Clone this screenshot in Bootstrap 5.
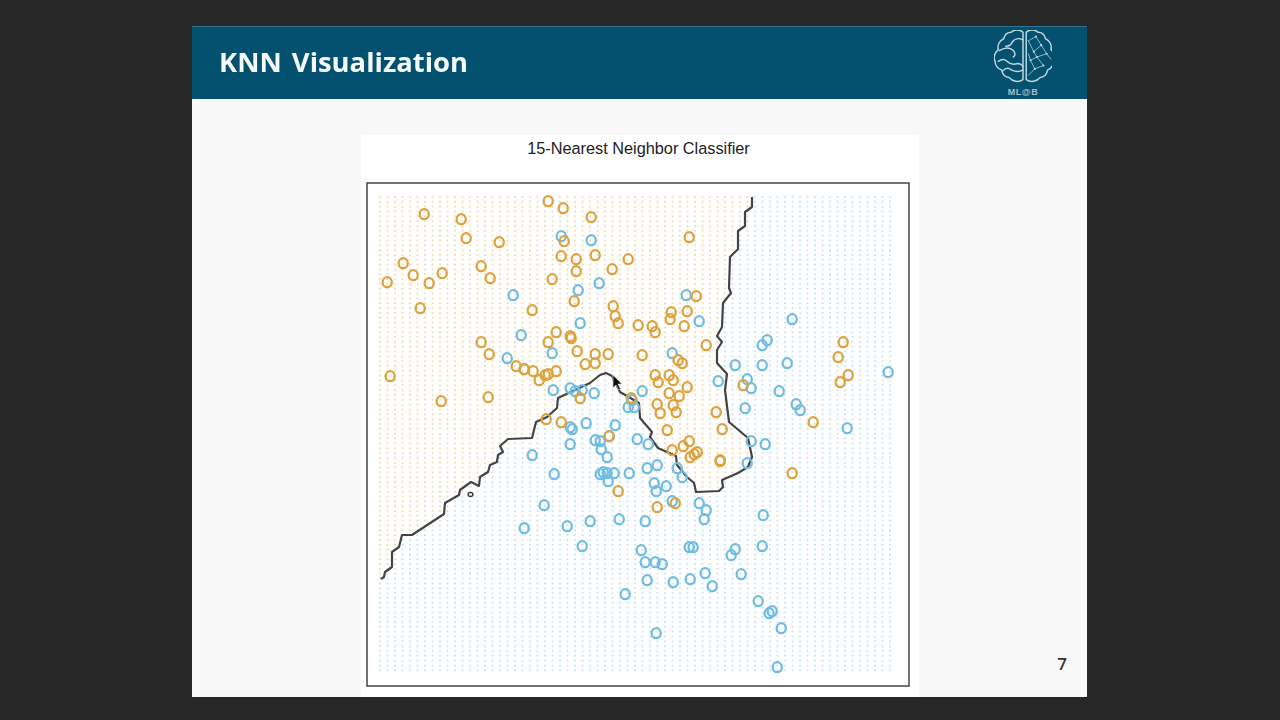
<!DOCTYPE html>
<html lang="en">
  <head>
    <meta charset="UTF-8" />
    <title>KNN Visualization</title>
    <link
      href="https://cdn.jsdelivr.net/npm/bootstrap@5.3.0/dist/css/bootstrap.min.css"
      rel="stylesheet"
    />
    <style>
      body {
        background-color: #272727;
        overflow: hidden;
      }

      .slide-frame {
        width: 895px;
        height: 671px;
        margin: 26px 0 0 192px;
        background-color: #f8f8f8;
        position: relative;
      }

      .slide-head {
        height: 73px;
        padding: 0 35px 0 27px;
        background-color: #04506f;
        border-top: 1px solid #2f7390;
      }

      .slide-title {
        margin: 0 0 2px;
        color: #f6f9fa;
        font-family: "Open Sans", sans-serif;
        font-weight: 700;
        font-size: 27.4px;
        word-spacing: 3px;
        filter: blur(0.3px);
      }

      .brain-logo {
        width: 58px;
        color: #bcd6df;
      }

      .brain-logo svg {
        display: block;
        filter: blur(0.4px);
      }

      .logo-text {
        margin-top: 4px;
        color: #a3bfca;
        font-family: "Liberation Sans", sans-serif;
        font-weight: 700;
        font-size: 9px;
        line-height: 9px;
        letter-spacing: 0.6px;
        text-align: center;
      }

      .chart-panel {
        width: 558px;
        height: 562px;
        margin: 36px 0 0 169px;
        background-color: #fff;
      }

      .chart-title {
        height: 40px;
        padding: 3px 3px 0 0;
        color: #222;
        font-family: "Liberation Sans", sans-serif;
        font-size: 16.3px;
        line-height: 20px;
        text-align: center;
      }

      .chart-panel svg {
        display: block;
        filter: blur(0.4px);
      }

      .page-no {
        position: absolute;
        right: 20px;
        bottom: 23px;
        color: #333;
        font-family: "Open Sans", sans-serif;
        font-weight: 600;
        font-size: 17px;
        line-height: 20px;
      }
    </style>
  </head>
  <body>
    <div class="slide-frame">
      <div class="slide-head d-flex align-items-center justify-content-between">
        <h1 class="slide-title">KNN Visualization</h1>
        <div class="brain-logo">
          <svg width="58" height="54" viewBox="996 33 54 50" fill="none" stroke="currentColor" stroke-width="1.4" stroke-linecap="round" stroke-linejoin="round">
            <!-- left half -->
            <path d="M1023 35c-3-3-8-3-11 0-3 0-6 2-7 6-4 2-6 6-5 10-3 3-5 7-3 11 0 4 3 7 6 8 1 4 3 7 7 7 3 4 9 5 13 2z" />
            <path d="M1023 42c-4-2-8-1-10 2-1 3-3 4-6 4M1001 52c5-3 10-3 13 0 2 2 2 5 0 6M1000 62c3-2 6-2 8 0 3 3 7 3 10 2 2 0 4 1 5 3M1004 71c3-3 6-3 8-1 4 2 8 2 11 0" />
            <!-- right half -->
            <path d="M1026 35c3-3 8-3 11 0 3 0 6 2 7 6 4 2 6 6 5 10 3 3 4 7 3 11-1 4-3 7-6 8-1 4-3 7-7 7-3 4-9 5-13 2z" />
            <path stroke-width="0.7" d="M1028 43l7-4 5 8-7 6-5-10M1040 47l5 8-9 3-3-5M1036 58l6 8-8 3-4-8 6-3M1034 69l-6 6M1030 61l-2-6M1045 55l4 5" />
            <g fill="currentColor" stroke="none">
              <circle cx="1035" cy="39" r="1" />
              <circle cx="1040" cy="47" r="1" />
              <circle cx="1033" cy="53" r="1" />
              <circle cx="1045" cy="55" r="1" />
              <circle cx="1036" cy="58" r="1" />
              <circle cx="1042" cy="66" r="1" />
              <circle cx="1030" cy="61" r="1" />
              <circle cx="1034" cy="69" r="1" />
            </g>
          </svg>
          <div class="logo-text">ML@B</div>
        </div>
      </div>

      <div class="chart-panel">
        <div class="chart-title">15-Nearest Neighbor Classifier</div>
        <svg id="knnPlot" width="558" height="522" viewBox="361 175 558 522">
          <g id="gridDots"></g>
          <rect x="367" y="183" width="542" height="503" fill="none" stroke="#444" stroke-width="1.5" />
          <polyline id="boundaryLine" fill="none" stroke="#444" stroke-width="2.2" stroke-linejoin="round" />
          <ellipse cx="470.500" cy="494.500" rx="2.400" ry="2" fill="none" stroke="#3b3b3b" stroke-width="1.400" />
          <g id="trainPoints" fill="none" stroke-width="2.3"></g>
          <path d="M613 375v13l3-3 2.500 5 2-1-2.500-5h4z" fill="#111" stroke="#ddd" stroke-width="0.7" />
        </svg>
      </div>

      <div class="page-no">7</div>
    </div>

    <script src="https://cdn.jsdelivr.net/npm/bootstrap@5.3.0/dist/js/bootstrap.bundle.min.js"></script>
    <script>
      const NS = "http://www.w3.org/2000/svg";

      const boundary = [
        [752,197],[752,207],[745,212],[745,226],[738,231],[738,249],[730,257],[729,288],[731,293],
        [723,303],[722,327],[717,336],[722,342],[717,350],[717,363],[727,374],[725,390],[729,422],
        [748,438],[752,457],[748,467],[738,473],[722,480],[723,487],[719,491],[696,492],[694,483],
        [687,477],[677,465],[676,456],[658,448],[650,437],[652,432],[640,418],[639,403],[620,392],
        [612,376],[606,373],[600,375],[590,383],[558,398],[557,408],[547,417],[536,422],[532,438],
        [508,439],[500,446],[503,452],[498,455],[497,462],[490,465],[488,472],[480,477],[479,486],
        [471,482],[460,490],[459,495],[445,503],[444,514],[412,535],[402,535],[399,547],[392,552],
        [392,567],[385,572],[384,577],[381,579]
      ];

      const orange = [
        [548,201],[563,208],[591,217],[424,214],[461,219],[466,238],[499,242],[564,241],[689,237],
        [561,256],[576,259],[595,255],[628,259],[576,271],[612,269],[403,263],[413,275],[429,283],
        [442,273],[387,282],[481,266],[490,278],[552,279],[420,308],[532,310],[574,301],[613,306],
        [615,316],[618,323],[671,312],[670,319],[687,311],[696,296],[684,326],[638,325],[652,326],
        [655,332],[556,332],[570,336],[571,338],[548,342],[481,342],[489,354],[577,351],[595,354],
        [608,354],[595,363],[585,364],[642,355],[706,345],[678,360],[682,363],[390,376],[516,366],
        [524,369],[533,371],[545,375],[548,374],[556,371],[539,380],[441,401],[488,397],[580,398],
        [655,375],[658,382],[669,375],[673,380],[687,387],[669,393],[679,396],[657,404],[673,405],
        [660,413],[676,412],[716,412],[722,429],[667,430],[689,441],[683,446],[672,450],[690,457],
        [694,454],[697,452],[720,460],[720,461],[743,385],[546,419],[561,422],[609,436],[631,398],
        [618,491],[657,507],[675,503],[792,473],[813,422],[843,342],[838,357],[848,375],[840,382]
      ];

      const blue = [
        [561,236],[591,240],[513,295],[578,290],[599,283],[580,323],[521,335],[552,353],[507,358],
        [524,369],[686,295],[699,321],[792,319],[767,340],[762,345],[787,363],[762,365],[735,365],
        [672,353],[718,381],[747,379],[751,388],[779,391],[745,408],[796,404],[800,410],[888,372],
        [847,428],[553,390],[570,388],[575,391],[582,390],[594,393],[642,391],[632,400],[628,407],
        [634,407],[615,425],[586,423],[570,427],[572,429],[570,444],[595,440],[600,441],[601,449],
        [609,436],[637,439],[648,444],[607,457],[532,455],[554,474],[600,474],[603,472],[607,473],
        [614,473],[629,473],[608,481],[647,468],[657,465],[654,483],[656,491],[666,486],[677,468],
        [682,477],[672,501],[699,503],[706,510],[704,519],[763,515],[751,441],[765,444],[747,463],
        [544,505],[524,528],[567,526],[590,521],[619,519],[645,521],[582,546],[641,550],[645,562],
        [655,562],[662,564],[647,580],[673,582],[690,579],[705,573],[712,586],[689,547],[693,547],
        [735,549],[731,555],[762,546],[741,574],[758,601],[772,611],[769,613],[781,628],[625,594],
        [656,633],[777,667]
      ];

      // orange side of the decision boundary, closed along the top left corner
      const orangeRegion = boundary.concat([[375,579],[375,190],[752,190]]);

      function insideRegion(x, y) {
        let inside = false;
        for (let i = 0, j = orangeRegion.length - 1; i < orangeRegion.length; j = i++) {
          const [xi, yi] = orangeRegion[i];
          const [xj, yj] = orangeRegion[j];
          if (yi > y !== yj > y && x < ((xj - xi) * (y - yi)) / (yj - yi) + xi) {
            inside = !inside;
          }
        }
        return inside;
      }

      const gridDots = document.getElementById("gridDots");
      for (let ix = 0; ix < 69; ix++) {
        for (let iy = 0; iy < 99; iy++) {
          const x = 380 + ix * 7.5;
          const y = 197 + iy * 4.83;
          const dot = document.createElementNS(NS, "circle");
          dot.setAttribute("cx", x);
          dot.setAttribute("cy", y);
          dot.setAttribute("r", 1);
          dot.setAttribute("fill", insideRegion(x, y) ? "#efd8ab" : "#c2e1f2");
          gridDots.appendChild(dot);
        }
      }

      document
        .getElementById("boundaryLine")
        .setAttribute("points", boundary.map((p) => p.join(",")).join(" "));

      const trainPoints = document.getElementById("trainPoints");
      function addPoints(list, colour) {
        list.forEach(([x, y]) => {
          const ring = document.createElementNS(NS, "ellipse");
          ring.setAttribute("cx", x + 0.2);
          ring.setAttribute("cy", y + 0.2);
          ring.setAttribute("rx", 4.6);
          ring.setAttribute("ry", 5);
          ring.setAttribute("stroke", colour);
          trainPoints.appendChild(ring);
        });
      }
      addPoints(blue, "#70bce3");
      addPoints(orange, "#dea23e");
    </script>
  </body>
</html>
